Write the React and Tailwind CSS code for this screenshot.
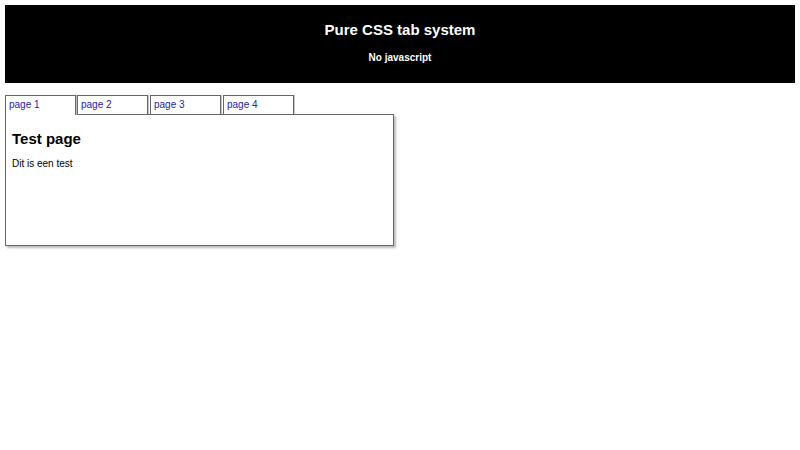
import { useState } from 'react'

const tabs = [
  { id: 1, label: 'page 1', title: 'Test page', body: 'Dit is een test' },
  { id: 2, label: 'page 2', title: 'Pagina 2', body: 'Tweede pagina' },
  { id: 3, label: 'page 3', title: 'Pagina 3', body: 'Derde pagina' },
  { id: 4, label: 'page 4', title: 'Pagina 4', body: 'Vierde pagina' },
]

export default function App() {
  const [active, setActive] = useState(1)
  const current = tabs.find(t => t.id === active)

  return (
    <div className="min-h-[450px] bg-white p-[5px] font-['Liberation_Sans',Arial,sans-serif]">
      <header className="h-[78px] bg-black text-white text-center flex flex-col items-center pt-[16px]">
        <h1 className="text-[15px] leading-[18px] font-bold">Pure CSS tab system</h1>
        <p className="mt-[12px] text-[10px] leading-[14px] font-bold">No javascript</p>
      </header>

      <div className="mt-[12px] w-[389px]">
        <div className="flex items-end gap-[2px]">
          {tabs.map((t, i) => {
            const on = t.id === active
            return (
              <button
                key={t.id}
                type="button"
                onClick={() => setActive(t.id)}
                className={`w-[71px] text-left pl-[3px] text-[10px] leading-[18px] text-[#2222a8] bg-white border border-b-0 border-[#666] shadow-[1px_0_0_#c4c4c4] ${
                  on ? 'h-[20px] -mb-px relative z-10 pb-px' : 'h-[19px]'
                } ${i === 0 ? '-mr-px' : ''}`}
              >
                {t.label}
              </button>
            )
          })}
        </div>
        <div className="h-[132px] border border-[#666] bg-white shadow-[2px_2px_2px_#bbb] px-[6px] pt-[15px]">
          <h2 className="text-[15px] leading-[18px] font-bold text-black">{current.title}</h2>
          <p className="mt-[9px] text-[10px] leading-[14px] text-black">{current.body}</p>
        </div>
      </div>
    </div>
  )
}
